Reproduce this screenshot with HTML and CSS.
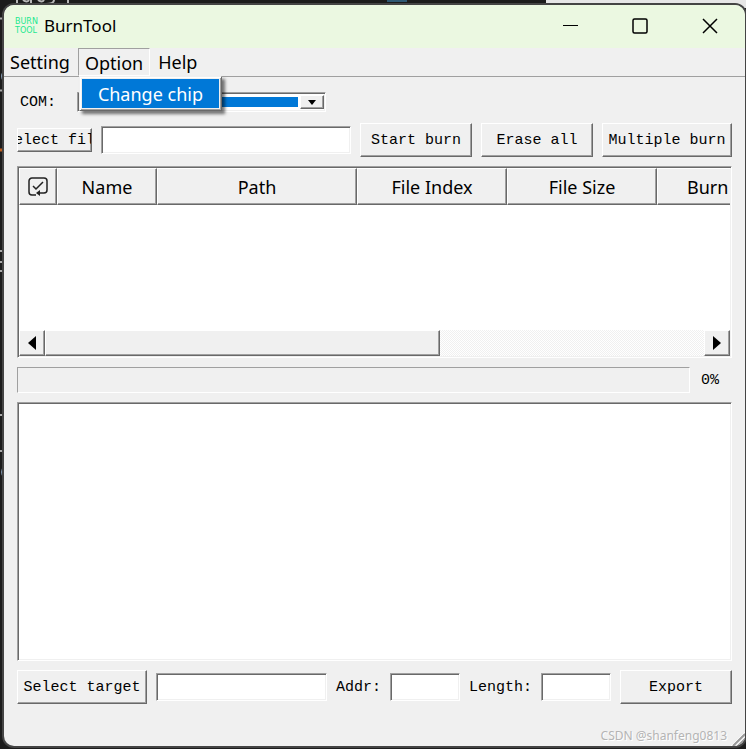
FILE: index.html
```html
<!DOCTYPE html>
<html lang="en">
<head>
<meta charset="utf-8">
<meta name="viewport" content="width=device-width, initial-scale=1">
<title>BurnTool</title>
<link rel="stylesheet" href="styles.css">
</head>
<body>
<svg class="backdrop" aria-hidden="true">
  <rect width="100%" height="100%" fill="#1c1c1c"/>
  <rect x="546" width="200" height="8" fill="#e6e6e6"/>
  <path d="M387 1h20" stroke="#2f5873" stroke-width="2"/>
  <path d="M387 3.500h55" stroke="#777" stroke-dasharray="5 1 8 2"/>
  <path d="M17 0v5M23 0q4 3 6 0M31 0v5M38 0q4 3 6 0M54 0q0 4-8 4M68 0v4" stroke="#b8b8b8" stroke-width="2" fill="none"/>
  <path d="M0 18.500h4M0 90.500h4M0 251h4M0 262h4M0 271h4M0 415h4M0 451h4" stroke="#aaa" stroke-width="2"/>
  <path d="M4 72q-4 4 0 9M3 427v14M4 467q-4 5 0 10" stroke="#8096ad" stroke-width="2" fill="none"/>
  <path d="M0 150h2" stroke="#c06020" stroke-width="3"/>
  <path d="M745.500 250v30M745.500 348v30" stroke="#777" stroke-dasharray="3 3"/>
</svg>
<div class="window">
  <header class="titlebar">
    <span class="logo" aria-hidden="true">BURN<br>TOOL</span>
    <h1>BurnTool</h1>
    <button class="caption" type="button" aria-label="Minimize"><svg width="16" height="16" viewBox="0 0 16 16"><path class="thin" d="M1 7.500h15"/></svg></button>
    <button class="caption" type="button" aria-label="Maximize"><svg width="16" height="16" viewBox="0 0 16 16"><rect x="1" y="1" width="14" height="14" rx="1.500"/></svg></button>
    <button class="caption" type="button" aria-label="Close"><svg width="16" height="16" viewBox="0 0 16 16"><path d="M1 1l14 14M15 1L1 15"/></svg></button>
  </header>
  <nav class="menubar">
    <button class="menu" type="button">Setting</button>
    <div class="menu-open">
      <button class="menu" type="button" aria-expanded="true">Option</button>
      <div class="popup"><button type="button">Change chip</button></div>
    </div>
    <button class="menu" type="button">Help</button>
  </nav>
  <main>
    <div class="port-row">
      <label for="com">COM:</label>
      <div class="combo sunken">
        <select id="com"><option></option></select>
        <span class="combo-arrow raised"><svg width="8" height="5" viewBox="0 0 8 5"><path d="M0 0h8L4 5z"/></svg></span>
      </div>
    </div>
    <div class="row">
      <button class="btn raised pick" type="button"><span>Select file</span></button>
      <input class="sunken grow" type="text" aria-label="File">
      <button class="btn raised" type="button">Start burn</button>
      <button class="btn raised" type="button">Erase all</button>
      <button class="btn raised wide" type="button">Multiple burn</button>
    </div>
    <section class="files sunken">
      <div class="viewport">
        <table>
          <colgroup><col class="c-check"><col class="c-name"><col class="c-path"><col class="c-num"><col class="c-num"><col class="c-num"></colgroup>
          <thead>
            <tr>
              <th class="raised"><svg width="20" height="20" viewBox="0 0 20 20" aria-label="Select all"><path d="M8 18H4a3 3 0 0 1-3-3V4a3 3 0 0 1 3-3h12a3 3 0 0 1 3 3v9a3 3 0 0 1-3 3h-5M5 9l3 3 7-7"/><path class="solid" d="M8 16l4-3v6z"/></svg></th>
              <th class="raised">Name</th><th class="raised">Path</th><th class="raised">File Index</th><th class="raised">File Size</th><th class="raised last">Burn</th>
            </tr>
          </thead>
        </table>
      </div>
      <div class="scroll">
        <button class="raised" type="button" aria-label="Scroll left"><svg width="8" height="14" viewBox="0 0 8 14"><path d="M8 0v14L0 7z"/></svg></button>
        <div class="track"><div class="thumb raised"></div></div>
        <button class="raised" type="button" aria-label="Scroll right"><svg width="8" height="14" viewBox="0 0 8 14"><path d="M0 0v14l8-7z"/></svg></button>
      </div>
    </section>
    <div class="progress">
      <div class="bar" role="progressbar" aria-label="Burn progress" aria-valuenow="0"></div>
      <span>0%</span>
    </div>
    <textarea class="sunken" aria-label="Log"></textarea>
    <div class="row">
      <button class="btn raised wide" type="button">Select target</button>
      <input class="sunken grow" type="text" aria-label="Target">
      <label for="addr">Addr:</label>
      <input class="sunken short" id="addr" type="text">
      <label for="length">Length:</label>
      <input class="sunken short" id="length" type="text">
      <button class="btn raised" type="button">Export</button>
    </div>
  </main>
  <span class="watermark">CSDN @shanfeng0813</span>
  <svg class="grip" width="14" height="14" viewBox="0 0 14 14" aria-hidden="true"><path d="M0 14L14 0M5 14l9-9M10 14l4-4" stroke="#fff"/><path d="M2 14L14 2M7 14l7-7M12 14l2-2" stroke="#999" stroke-width="2"/></svg>
</div>
</body>
</html>
```
FILE: styles.css
```css
* {
  box-sizing: border-box;
}

body {
  margin: 0;
  min-height: 100vh;
  padding: 5px 1px 3px 4px;
  display: flex;
  background: #1c1c1c;
  color: #000;
  font: 15px/20px "Liberation Mono", monospace;
}

button,
input,
select,
textarea {
  margin: 0;
  padding: 0;
  border-radius: 0;
  font: inherit;
  color: inherit;
}

.backdrop {
  position: absolute;
  top: 0;
  left: 0;
  width: 100%;
  height: 100%;
}

.window {
  position: relative;
  flex: 1;
  min-width: 0;
  display: flex;
  flex-direction: column;
  overflow: hidden;
  border-radius: 10px;
  background: #f0f0f0;
  box-shadow: 0 0 0 2px #444;
}

.sunken {
  border: 1px solid;
  border-color: #a0a0a0 #fff #fff #a0a0a0;
  box-shadow: inset 1px 1px #696969, inset -1px -1px #f0f0f0;
  background: #fff;
}

.raised {
  border: 1px solid;
  border-color: #fff #696969 #696969 #fff;
  box-shadow: inset -1px -1px #a0a0a0;
  background: #f0f0f0;
}

.titlebar {
  display: flex;
  align-items: center;
  height: 43px;
  padding: 0 0 2px 11px;
  background: #ebf8e1;
}

.logo {
  width: 29px;
  color: #1ce88f;
  font: 8px/9px "DejaVu Sans", sans-serif;
}

h1 {
  flex: 1;
  margin: 0;
  font: 17px/24px "Noto Sans", sans-serif;
}

.caption {
  width: 70px;
  height: 41px;
  border: 0;
  background: none;
}

.caption svg {
  display: block;
  margin: auto;
  fill: none;
  stroke: #000;
  stroke-width: 1.5;
}

.caption .thin {
  stroke-width: 1;
}

.menubar {
  display: flex;
  gap: 2px;
  height: 29px;
  border-bottom: 1px solid #a0a0a0;
  font: 18px/28px "Noto Sans", sans-serif;
}

.menu {
  height: 28px;
  padding: 0 6px;
  border: 0;
  background: none;
}

.menu-open {
  position: relative;
  border: 1px solid;
  border-color: #a0a0a0 #fff #fff #a0a0a0;
}

.popup {
  position: absolute;
  z-index: 2;
  top: 27px;
  left: 0;
  padding: 2px;
  border: 1px solid;
  border-color: #f0f0f0 #696969 #696969 #f0f0f0;
  background: #f0f0f0;
  box-shadow: inset 1px 1px #fff, inset -1px -1px #a0a0a0, 3px 3px 3px #0008;
}

.popup button {
  display: block;
  height: 29px;
  padding: 0 16px;
  border: 0;
  background: #0078d7;
  color: #fff;
  white-space: nowrap;
}

main {
  flex: 1;
  min-height: 0;
  display: flex;
  flex-direction: column;
  gap: 9px;
  padding: 13px 13px 42px;
}

.port-row {
  display: flex;
  align-items: center;
  height: 24px;
}

.port-row label {
  width: 60px;
  padding-left: 3px;
}

label,
.progress span {
  padding-top: 2px;
}

.combo {
  display: flex;
  align-items: center;
  gap: 2px;
  width: 249px;
  height: 20px;
  padding: 0 1px 0 3px;
}

.combo select {
  flex: 1;
  height: 10px;
  border: 0;
  appearance: none;
  background: #0078d7;
}

.combo-arrow {
  display: flex;
  align-items: center;
  justify-content: center;
  width: 24px;
  height: 14px;
  pointer-events: none;
}

.row {
  display: flex;
  align-items: center;
  gap: 9px;
}

.btn {
  width: 112px;
  height: 34px;
  padding-top: 2px;
  white-space: nowrap;
}

.btn.wide {
  width: 130px;
}

.btn.pick {
  display: flex;
  align-items: center;
  justify-content: center;
  width: 75px;
  height: 24px;
  overflow: hidden;
}

input {
  height: 28px;
}

.grow {
  flex: 1;
  min-width: 0;
}

.short {
  width: 70px;
}

.files {
  display: flex;
  flex-direction: column;
  height: 192px;
  padding: 1px;
}

.viewport {
  flex: 1;
  overflow: hidden;
}

table {
  width: 788px;
  table-layout: fixed;
  border-collapse: separate;
  border-spacing: 0;
  font: 18px/24px "Noto Sans", sans-serif;
}

.c-check { width: 38px; }
.c-name { width: 100px; }
.c-path { width: 200px; }
.c-num { width: 150px; }

th {
  height: 37px;
  padding: 0;
  font-weight: 400;
  text-align: center;
}

th.last {
  padding-left: 29px;
  text-align: left;
}

th svg {
  display: block;
  margin: auto;
  fill: none;
  stroke: #222;
  stroke-width: 1.5;
}

th .solid {
  fill: #222;
  stroke: none;
}

.scroll {
  display: flex;
  height: 26px;
}

.scroll button {
  display: flex;
  align-items: center;
  justify-content: center;
  width: 26px;
}

.track {
  flex: 1;
  background: repeating-conic-gradient(#f0f0f0 0 25%, #fff 0 50%) 0 0 / 2px 2px;
}

.thumb {
  width: 60%;
  height: 100%;
}

.progress {
  display: flex;
  align-items: center;
}

.progress span {
  width: 42px;
  padding-left: 11px;
}

.bar {
  flex: 1;
  height: 26px;
  border: 1px solid;
  border-color: #a0a0a0 #fff #fff #a0a0a0;
}

textarea {
  display: block;
  flex: 1;
  width: 100%;
  min-height: 80px;
  resize: none;
}

.watermark {
  position: absolute;
  right: 18px;
  bottom: 1px;
  color: #b4b4b4;
  font: 12px/18px "Noto Sans", sans-serif;
  text-shadow: 1px 1px #fff;
}

.grip {
  position: absolute;
  right: 0;
  bottom: 0;
}
```
